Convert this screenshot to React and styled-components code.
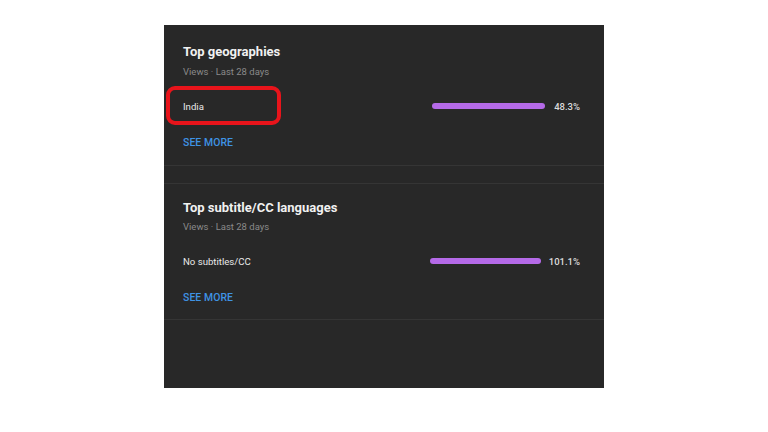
import React from 'react';
import styled, { createGlobalStyle } from 'styled-components';

const GlobalStyle = createGlobalStyle`
  html, body {
    margin: 0;
    padding: 0;
    background: #ffffff;
  }
  body {
    font-family: Roboto, "Liberation Sans", Arial, sans-serif;
    -webkit-font-smoothing: antialiased;
  }
`;

const Page = styled.div`
  width: 768px;
  height: 432px;
  display: flex;
  justify-content: center;
  align-items: flex-start;
  padding-top: 25px;
  box-sizing: border-box;
`;

const Panel = styled.div`
  width: 440px;
  height: 363px;
  background: #282828;
  display: flex;
  flex-direction: column;
`;

const Section = styled.section`
  padding: ${props => props.$compact ? '14px 24px 13px 19px' : '17px 24px 14px 19px'};
  border-bottom: 1px solid #353535;
  display: flex;
  flex-direction: column;
`;

const Spacer = styled.div`
  height: 17px;
  border-bottom: 1px solid #353535;
`;

const Title = styled.h3`
  margin: 0;
  font-size: 13px;
  line-height: 20px;
  font-weight: 700;
  color: #f1f1f1;
`;

const Subtitle = styled.div`
  margin-top: ${props => props.$compact ? '2px' : '3px'};
  font-size: 9.5px;
  line-height: 14px;
  color: #8a8a8a;
`;

const Row = styled.div`
  position: relative;
  margin-top: 17px;
  height: 20px;
  display: flex;
  align-items: center;
`;

const Label = styled.div`
  flex: 1;
  font-size: 9.6px;
  color: #e8e8e8;
`;

const Bar = styled.div`
  width: ${props => props.$width}px;
  height: 6px;
  border-radius: 3px;
  background: #b56ae8;
`;

const Value = styled.div`
  margin-left: ${props => props.$gap}px;
  font-size: 9.5px;
  font-weight: 500;
  color: #dcdcdc;
  text-align: right;
`;

const Highlight = styled.div`
  position: absolute;
  left: -17px;
  top: -10px;
  width: 115px;
  height: 39px;
  box-sizing: border-box;
  border: 4px solid #e8141b;
  border-radius: 9px;
  pointer-events: none;
`;

const SeeMore = styled.a`
  margin-top: 19px;
  font-size: 10.4px;
  line-height: 16px;
  font-weight: 500;
  color: #3f93e4;
  text-decoration: none;
  letter-spacing: 0.1px;
  cursor: pointer;
  align-self: flex-start;
`;

const sections = [
  {
    id: 'geo',
    title: 'Top geographies',
    label: 'India',
    value: '48.3%',
    barWidth: 113,
    gap: 9,
    highlighted: true
  },
  {
    id: 'subs',
    title: 'Top subtitle/CC languages',
    label: 'No subtitles/CC',
    value: '101.1%',
    barWidth: 111,
    gap: 8,
    compact: true
  }
];

function StatCard({ item }) {
  return (
    <Section $compact={item.compact}>
      <Title>{item.title}</Title>
      <Subtitle $compact={item.compact}>Views · Last 28 days</Subtitle>
      <Row>
        <Label>{item.label}</Label>
        <Bar $width={item.barWidth} />
        <Value $gap={item.gap}>{item.value}</Value>
        {item.highlighted && <Highlight />}
      </Row>
      <SeeMore>SEE MORE</SeeMore>
    </Section>
  );
}

export default function App() {
  return (
    <>
      <GlobalStyle />
      <Page>
        <Panel>
          <StatCard item={sections[0]} />
          <Spacer />
          <StatCard item={sections[1]} />
        </Panel>
      </Page>
    </>
  );
}
